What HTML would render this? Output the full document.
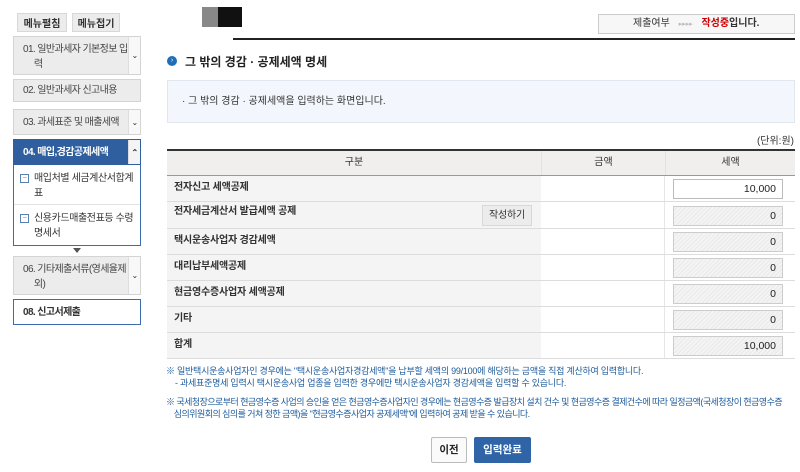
<!DOCTYPE html>
<html><head><meta charset="utf-8"><style>
*{box-sizing:border-box;margin:0;padding:0}
body{width:800px;height:472px;background:#fff;font-family:"Liberation Sans","Noto Sans CJK KR",sans-serif;color:#222;position:relative;overflow:hidden;font-size:11px}
.a{position:absolute}
.btn{background:#ececec;border:1px solid #d8d8d8;font-size:10px;font-weight:bold;display:flex;align-items:center;justify-content:center;color:#333}
.mi{position:absolute;left:13px;width:128px;background:#ececec;border:1px solid #d4d4d4;font-size:10px;letter-spacing:-0.6px;color:#444;padding:5px 13px 0 9px;line-height:15px;white-space:nowrap;overflow:hidden}
.mi .ch{position:absolute;right:0;top:0;bottom:0;width:12px;background:#f8f8f8;border-left:1px solid #ddd;display:flex;align-items:center;justify-content:center;font-size:8px;color:#333}
.row{position:absolute;left:167px;width:628px;height:26px;border-bottom:1px solid #dcdcdc}
.row .l{position:absolute;left:0;top:0;width:374px;height:100%;background:#f4f4f4;padding-left:7px;font-size:10px;font-weight:bold;color:#333;line-height:24px;letter-spacing:-0.2px}
.row .m{position:absolute;left:374px;top:0;width:124px;height:100%;border-right:1px solid #e6e6e6}
.inp{position:absolute;left:506px;top:3px;width:110px;height:20px;border:1px solid #ccc;text-align:right;padding-right:6px;font-size:10.5px;line-height:18px;background:repeating-linear-gradient(135deg,#f4f4f4 0 2px,#e9e9e9 2px 3px)}
.note{color:#1d5b9c;font-size:9px;line-height:12px;white-space:nowrap;letter-spacing:-0.25px}
</style></head><body>
<div class="a btn" style="left:17px;top:13px;width:50px;height:19px">메뉴펼침</div>
<div class="a btn" style="left:72px;top:13px;width:48px;height:19px">메뉴접기</div>
<div class="mi" style="top:36px;height:39px">01. 일반과세자 기본정보 입<br>&nbsp;&nbsp;&nbsp;&nbsp;&nbsp;력<div class="ch">&#8964;</div></div>
<div class="mi" style="top:79px;height:23px;padding-top:3px">02. 일반과세자 신고내용</div>
<div class="mi" style="top:109px;height:26px">03. 과세표준 및 매출세액<div class="ch">&#8964;</div></div>
<div class="mi" style="top:139px;height:26px;background:#2f5f9f;border-color:#2f5f9f;color:#fff;font-weight:bold;padding-top:5px">04. 매입,경감공제세액<div class="ch" style="background:#f4f4f4;color:#333">&#8963;</div></div>
<div class="a" style="left:13px;top:165px;width:128px;height:81px;border:1px solid #3b6cb0;border-top:none;font-size:10px;letter-spacing:-0.4px;color:#333;line-height:15px">
 <div style="padding:6px 4px 4px 20px;height:40px;border-bottom:1px solid #e3e3e3;position:relative"><span style="position:absolute;left:6px;top:9px;width:9px;height:9px;border:1px solid #5a7fb3;font-size:7px;line-height:6px;text-align:center;color:#5a7fb3">–</span>매입처별 세금계산서합계<br>표</div>
 <div style="padding:6px 4px 4px 20px;position:relative"><span style="position:absolute;left:6px;top:9px;width:9px;height:9px;border:1px solid #5a7fb3;font-size:7px;line-height:6px;text-align:center;color:#5a7fb3">–</span>신용카드매출전표등 수령<br>명세서</div>
</div>
<div class="a" style="left:73px;top:248px;border-left:4px solid transparent;border-right:4px solid transparent;border-top:5px solid #555"></div>
<div class="mi" style="top:256px;height:39px">06. 기타제출서류(영세율제<br>&nbsp;&nbsp;&nbsp;&nbsp;&nbsp;외)<div class="ch">&#8964;</div></div>
<div class="mi" style="top:299px;height:26px;background:#fff;border-color:#3b6cb0;font-weight:bold;color:#333;padding-top:5px">08. 신고서제출</div>

<div class="a" style="left:202px;top:7px;width:16px;height:20px;background:#888"></div>
<div class="a" style="left:218px;top:7px;width:24px;height:20px;background:#111"></div>
<div class="a" style="left:598px;top:14px;width:197px;height:20px;border:1px solid #ccc;background:#f7f7f7;font-size:10px;line-height:18px;padding-left:34px;color:#333;white-space:nowrap">제출여부 <span style="color:#bbb;font-size:7px;margin:0 6px">▸▸▸▸</span> <b style="color:#c00">작성중</b><b>입니다.</b></div>
<div class="a" style="left:233px;top:38px;width:562px;height:2px;background:#222"></div>

<div class="a" style="left:167px;top:56px;width:10px;height:10px;border-radius:50%;background:#1f6fb8;color:#fff;font-size:7px;line-height:10px;text-align:center">›</div>
<div class="a" style="left:185px;top:53px;font-size:12px;font-weight:bold;color:#222">그 밖의 경감 · 공제세액 명세</div>
<div class="a" style="left:167px;top:80px;width:628px;height:43px;background:#f3f6fc;border:1px solid #e1e7f0;font-size:10px;line-height:41px;padding-left:14px;color:#333">· 그 밖의 경감 · 공제세액을 입력하는 화면입니다.</div>
<div class="a" style="right:6px;top:132px;font-size:10px;color:#333">(단위:원)</div>

<div class="a" style="left:167px;top:149px;width:628px;height:2px;background:#333"></div>
<div class="a" style="left:167px;top:151px;width:628px;height:25px;background:#f0efed;border-bottom:1px solid #999;font-size:10px;color:#333;line-height:24px">
 <span class="a" style="left:0;width:374px;text-align:center">구분</span>
 <span class="a" style="left:374px;width:124px;text-align:center;border-left:1px solid #e2e2e2;height:24px">금액</span>
 <span class="a" style="left:498px;width:130px;text-align:center;border-left:1px solid #e2e2e2;height:24px">세액</span>
</div>
<div class="row" style="top:176px"><div class="l">전자신고 세액공제</div><div class="m"></div><div class="inp" style="background:#fff;border-color:#bbb">10,000</div></div>
<div class="row" style="top:202px;height:27px"><div class="l" style="line-height:20px">전자세금계산서 발급세액 공제<span class="a" style="left:315px;top:3px;width:50px;height:21px;background:#ececec;border:1px solid #d8d8d8;font-size:10px;line-height:19px;text-align:center;font-weight:normal">작성하기</span></div><div class="m"></div><div class="inp" style="top:4px">0</div></div>
<div class="row" style="top:229px"><div class="l">택시운송사업자 경감세액</div><div class="m"></div><div class="inp">0</div></div>
<div class="row" style="top:255px"><div class="l">대리납부세액공제</div><div class="m"></div><div class="inp">0</div></div>
<div class="row" style="top:281px"><div class="l">현금영수증사업자 세액공제</div><div class="m"></div><div class="inp">0</div></div>
<div class="row" style="top:307px"><div class="l">기타</div><div class="m"></div><div class="inp">0</div></div>
<div class="row" style="top:333px"><div class="l">합계</div><div class="m"></div><div class="inp">10,000</div></div>

<div class="a note" style="left:166px;top:365px">※ 일반택시운송사업자인 경우에는 "택시운송사업자경감세액"을 납부할 세액의 99/100에 해당하는 금액을 직접 계산하여 입력합니다.<br>&nbsp;&nbsp;&nbsp;&nbsp;- 과세표준명세 입력시 택시운송사업 업종을 입력한 경우에만 택시운송사업자 경감세액을 입력할 수 있습니다.</div>
<div class="a note" style="left:166px;top:396px;letter-spacing:-0.55px">※ 국세청장으로부터 현금영수증 사업의 승인을 얻은 현금영수증사업자인 경우에는 현금영수증 발급장치 설치 건수 및 현금영수증 결제건수에 따라 일정금액(국세청장이 현금영수증<br>&nbsp;&nbsp;&nbsp;&nbsp;심의위원회의 심의를 거쳐 정한 금액)을 "현금영수증사업자 공제세액"에 입력하여 공제 받을 수 있습니다.</div>

<div class="a" style="left:431px;top:437px;width:36px;height:26px;border:1px solid #bbb;background:#fafafa;font-size:10.5px;font-weight:bold;line-height:24px;text-align:center;border-radius:2px">이전</div>
<div class="a" style="left:474px;top:437px;width:57px;height:26px;background:#2f64a6;color:#fff;font-size:10.5px;font-weight:bold;line-height:26px;text-align:center;border-radius:2px">입력완료</div>
</body></html>
